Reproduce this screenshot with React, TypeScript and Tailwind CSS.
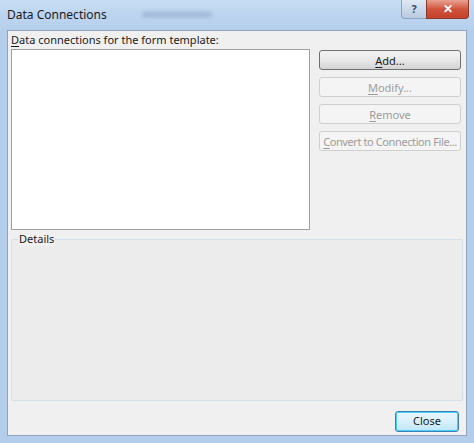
import React from 'react';

const font = { fontFamily: '"Noto Sans", "Open Sans", sans-serif' };

const DialogButton: React.FC<{ label: string; hotkey: number; disabled?: boolean; tight?: boolean }> = ({
  label,
  hotkey,
  disabled,
  tight,
}) => {
  const before = label.slice(0, hotkey);
  const key = label.charAt(hotkey);
  const after = label.slice(hotkey + 1);
  return (
    <div
      className={`flex h-[20px] w-[142px] items-center justify-center whitespace-nowrap rounded-[3px] border text-[11px] leading-none ${
        tight ? 'tracking-[-0.4px]' : ''
      } ${
        disabled
          ? 'border-[#cfcfcf] bg-[#f4f4f4] text-[#9c9c9c]'
          : 'border-[#707070] bg-gradient-to-b from-[#f2f2f2] via-[#e8e8e8] to-[#d4d4d4] text-[#1a1a1a]'
      }`}
    >
      <span>
        {before}
        <span className="underline underline-offset-2">{key}</span>
        {after}
      </span>
    </div>
  );
};

export default function App() {
  return (
    <div className="h-[443px] w-[474px] overflow-hidden bg-[#b4cdea]" style={font}>
      {/* title bar */}
      <div className="relative h-[30px] bg-gradient-to-b from-[#c9def5] via-[#bcd4ef] to-[#b6cfeb]">
        <div className="absolute left-[7px] top-[6px] text-[12px] text-[#1b1b1b]">Data Connections</div>
        <div className="absolute left-[142px] top-[12px] h-[5px] w-[70px] rounded-full bg-[#7d97b8] opacity-50 blur-[2px]" />
        <div className="absolute left-[401px] top-0 flex h-[19px] w-[26px] items-center justify-center rounded-bl-[4px] border border-t-0 border-[#8ea4c0] bg-gradient-to-b from-[#dfe9f5] to-[#b9cbe0] text-[11px] font-bold text-[#3c4c66]">
          ?
        </div>
        <div className="absolute left-[426px] top-0 flex h-[19px] w-[43px] items-center justify-center rounded-br-[4px] border border-t-0 border-[#8a3a2c] bg-gradient-to-b from-[#e8a191] via-[#d0533c] to-[#c4412a] text-[12px] font-bold text-white">
          ✕
        </div>
      </div>
      {/* client */}
      <div className="mx-[7px] flex h-[406px] flex-col border border-[#8fa3bd] bg-[#f0f0f0]">
        <div className="px-[3px] pt-[2px] text-[11px] leading-[14px] text-[#1b1b1b]">
          <span className="underline underline-offset-2">D</span>ata connections for the form template:
        </div>
        <div className="flex gap-[9px] px-[3px] pt-[2px]">
          <div className="h-[181px] w-[299px] border border-[#a0a0a0] bg-white" />
          <div className="flex flex-col gap-[7px] pt-[1px]">
            <DialogButton label="Add..." hotkey={0} />
            <DialogButton label="Modify..." hotkey={0} disabled />
            <DialogButton label="Remove" hotkey={0} disabled />
            <DialogButton label="Convert to Connection File..." hotkey={0} disabled tight />
          </div>
        </div>
        <div className="relative mx-[3px] mt-[9px] h-[162px] rounded-[2px] border border-[#d5dfe5] bg-[#ececec]">
          <div className="absolute left-[6px] top-[-8px] bg-[#f0f0f0] px-[1px] text-[11px] leading-[14px] text-[#1b1b1b]">
            Details
          </div>
        </div>
        <div className="flex justify-end px-[7px] pt-[10px]">
          <div className="flex h-[21px] w-[64px] items-center justify-center rounded-[3px] border border-[#3c7fb1] bg-gradient-to-b from-[#eaf6fd] via-[#d9f0fc] to-[#bee6fd] text-[11px] text-[#1b1b1b] shadow-[inset_0_0_0_1px_#48d0fd]">
            Close
          </div>
        </div>
      </div>
    </div>
  );
}
